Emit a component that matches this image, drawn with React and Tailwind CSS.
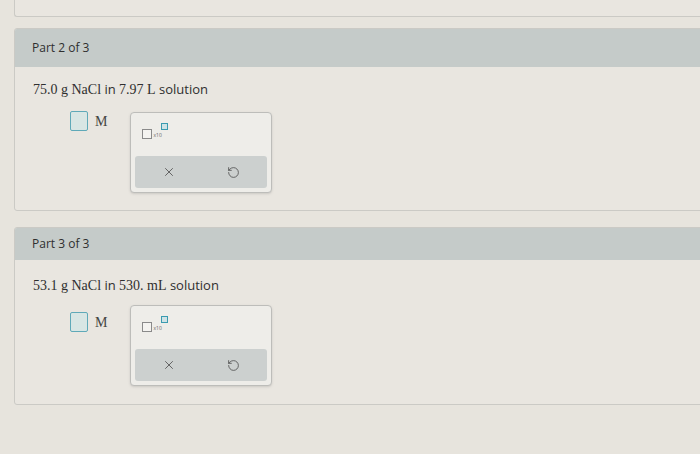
import { X, RotateCcw } from 'lucide-react';

const serif = { fontFamily: '"Liberation Serif", "Times New Roman", serif' };

const ExpIcon = () => (
  <div className="flex items-end h-[16px]">
    <div className="w-[10px] h-[10px] border border-[#8a8a8a] bg-[#f4f3f0]"></div>
    <span className="text-[5px] leading-none text-[#666] ml-[1px] mb-[1px]">x10</span>
    <div className="w-[7px] h-[7px] border border-[#3a9bb0] bg-[#cfe3e6] self-start -ml-[1px]"></div>
  </div>
);

const Part = ({ title, children, headH, gapTop, boxMt, panelMt, pb }) => (
  <div className="ml-[14px] w-[720px] border border-[#cbcac5] rounded-[3px] bg-[#e9e6e0] overflow-hidden">
    <div className={`${headH} bg-[#c5cbc9] flex items-center pl-[17px] text-[12px] text-[#2f2f2f]`}>
      {title}
    </div>
    <div className={`${gapTop} ${pb} pl-[18px]`}>
      <p className="text-[13px] text-[#2f2f2f] leading-[16px]">{children}</p>
      <div className={`flex items-start ${boxMt}`}>
        <div className="ml-[37px] flex items-start">
          <div className="w-[18px] h-[20px] border-[1.5px] border-[#5fa9b8] rounded-[2px] bg-[#d8e6e4]"></div>
          <span className="ml-[7px] text-[14px] text-[#444] leading-none mt-[4px]" style={serif}>M</span>
        </div>
        <div className={`ml-[23px] ${panelMt} w-[142px] h-[81px] border border-[#bdbdba] rounded-[4px] bg-[#eeede9] shadow-sm p-[4px] flex flex-col`}>
          <div className="pl-[7px] pt-[6px] h-[39px]">
            <ExpIcon />
          </div>
          <div className="flex-1 bg-[#ccd0cf] rounded-[3px] flex items-center justify-between px-[27px]">
            <X size={14} strokeWidth={1.5} className="text-[#555]" />
            <RotateCcw size={13} strokeWidth={1.6} className="text-[#555]" />
          </div>
        </div>
      </div>
    </div>
  </div>
);

export default function App() {
  return (
    <div className="w-[700px] h-[454px] overflow-hidden bg-[#e7e4dd]" style={{ fontFamily: '"Open Sans", "Noto Sans", sans-serif' }}>
      <div className="ml-[14px] w-[720px] h-[17px] border-b border-l border-[#cbcac5] rounded-bl-[3px] bg-[#e9e6e0]"></div>
      <div className="h-[11px]"></div>
      <Part title="Part 2 of 3" headH="h-[38px]" gapTop="pt-[14px]" boxMt="mt-[13px]" panelMt="mt-[1px]" pb="pb-[17px]">
        <span className="text-[14px]" style={serif}>75.0 g NaCl</span> in <span className="text-[14px]" style={serif}>7.97 L</span> solution
      </Part>
      <div className="h-[16px]"></div>
      <Part title="Part 3 of 3" headH="h-[32px]" gapTop="pt-[17px]" boxMt="mt-[18px]" panelMt="-mt-[7px]" pb="pb-[18px]">
        <span className="text-[14px]" style={serif}>53.1 g NaCl</span> in <span className="text-[14px]" style={serif}>530. mL</span> solution
      </Part>
    </div>
  );
}
